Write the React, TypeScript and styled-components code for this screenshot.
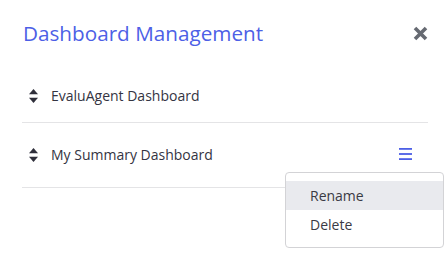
import React from "react";
import styled, { createGlobalStyle } from "styled-components";

const Global = createGlobalStyle`
  html, body { margin: 0; padding: 0; background: #fff; }
  body { font-family: "Open Sans", "Liberation Sans", sans-serif; }
`;

const Modal = styled.div`
  width: 448px;
  height: 262px;
  box-sizing: border-box;
  padding: 18px 20px 0 22px;
  background: #fff;
  overflow: hidden;
`;

const Header = styled.div`
  display: flex;
  align-items: center;
  justify-content: space-between;
  height: 30px;
  margin-bottom: 22px;
`;

const Title = styled.h1`
  margin: 0 0 0 1px;
  font-size: 20.7px;
  font-weight: 500;
  color: #4d5fe6;
  line-height: 28px;
`;

const CloseButton = styled.button`
  border: 0;
  background: none;
  padding: 0;
  width: 15px;
  height: 15px;
  display: flex;
  align-items: center;
  justify-content: center;
  cursor: pointer;
`;

const List = styled.div`
  display: flex;
  flex-direction: column;
`;

const Row = styled.div`
  position: relative;
  display: flex;
  align-items: center;
  gap: 13px;
  padding: 15px 0 16px 7px;
  border-bottom: 1px solid #e4e4e6;
  min-height: 21px;
`;

const Name = styled.span`
  flex: 1;
  font-size: 14px;
  color: #343442;
  line-height: 21px;
`;

const MenuButton = styled.button`
  border: 0;
  background: none;
  padding: 10px 16px 11px;
  display: flex;
  align-items: center;
  cursor: pointer;
`;

const Dropdown = styled.div`
  position: absolute;
  top: 49px;
  right: -16px;
  width: 159px;
  box-sizing: border-box;
  padding: 8px 0;
  background: #fff;
  border: 1px solid #d3d3d6;
  border-radius: 4px;
  z-index: 2;
`;

const Item = styled.div<{ $active?: boolean }>`
  padding: 4px 24px;
  font-size: 14px;
  line-height: 21px;
  color: #3a3a44;
  background: ${(p) => (p.$active ? "#e9eaee" : "transparent")};
`;

const SortIcon = () => (
  <svg width="9" height="14" viewBox="0 0 9 14">
    <path d="M4.5 0 L9 5.2 L0 5.2 Z" fill="#2f2f3a" />
    <path d="M4.5 14 L9 8.8 L0 8.8 Z" fill="#2f2f3a" />
  </svg>
);

const CloseIcon = () => (
  <svg width="15" height="15" viewBox="0 0 15 15">
    <path d="M2 2 L13 13 M13 2 L2 13" stroke="#666a72" strokeWidth="3.6" strokeLinecap="butt" />
  </svg>
);

const BarsIcon = () => (
  <svg width="13" height="12" viewBox="0 0 13 12">
    <rect x="0" y="0" width="13" height="1.8" fill="#4d5fe6" />
    <rect x="0" y="5.1" width="13" height="1.8" fill="#4d5fe6" />
    <rect x="0" y="10.2" width="13" height="1.8" fill="#4d5fe6" />
  </svg>
);

export default function App() {
  return (
    <>
      <Global />
      <Modal>
        <Header>
          <Title>Dashboard Management</Title>
          <CloseButton aria-label="Close">
            <CloseIcon />
          </CloseButton>
        </Header>
        <List>
          <Row>
            <SortIcon />
            <Name>EvaluAgent Dashboard</Name>
          </Row>
          <Row>
            <SortIcon />
            <Name>My Summary Dashboard</Name>
            <MenuButton aria-label="Options">
              <BarsIcon />
            </MenuButton>
            <Dropdown>
              <Item $active>Rename</Item>
              <Item>Delete</Item>
            </Dropdown>
          </Row>
        </List>
      </Modal>
    </>
  );
}
